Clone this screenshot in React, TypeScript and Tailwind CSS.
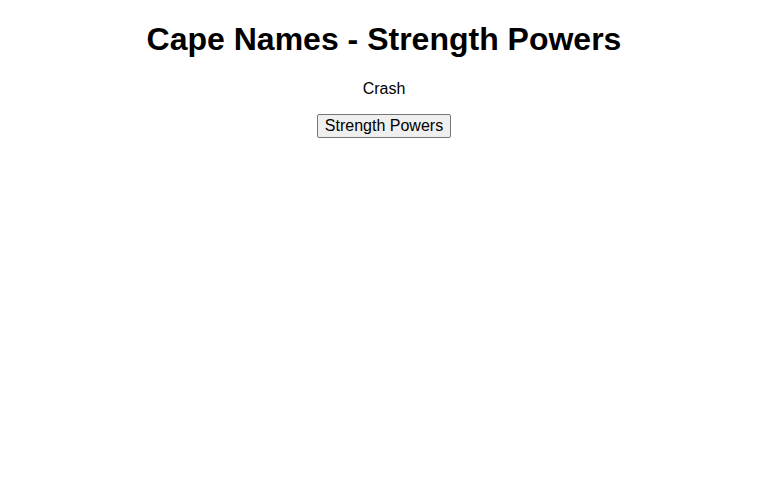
export default function App() {
  return (
    <div className="text-center text-black bg-white min-h-screen pt-[21px]" style={{ fontFamily: '"Liberation Sans", Arial, sans-serif' }}>
      <h1 className="text-[32px] leading-[37px] font-bold mb-[22px]">Cape Names - Strength Powers</h1>
      <p className="text-base leading-[18px] mb-4">Crash</p>
      <button className="text-base leading-[18px] px-[7px] py-[2px] border border-[#767676] bg-[#efefef] rounded-[2px] text-black">
        Strength Powers
      </button>
    </div>
  );
}
